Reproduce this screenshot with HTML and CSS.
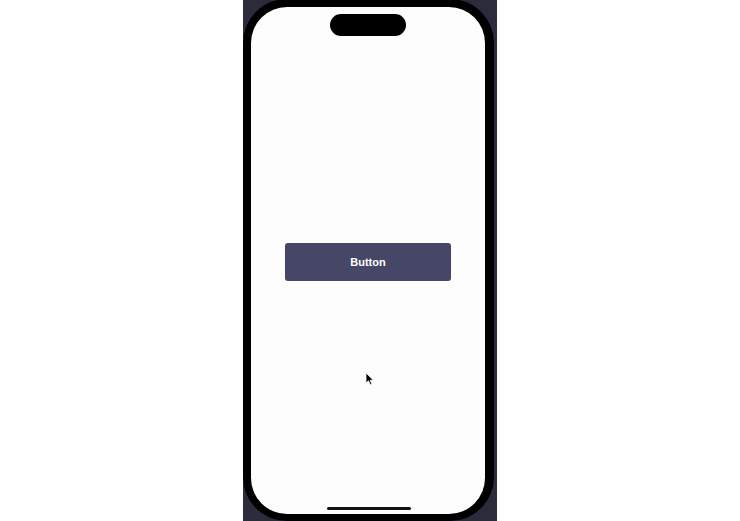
FILE: index.html
```html
<!DOCTYPE html>
<html>
<head>
<meta charset="utf-8">
<link rel="stylesheet" href="styles.css">
</head>
<body>
<div class="stage">
  <div class="device">
    <div class="bezel">
      <div class="screen">
        <div class="island"></div>
        <div class="content">
          <button class="btn">Button</button>
        </div>
        <svg class="cursor" width="10" height="14" viewBox="0 0 10 14">
          <path d="M1 1 L1 11 L3.5 8.8 L5.3 12.8 L6.9 12.1 L5.2 8.2 L8.4 8.1 Z" fill="#000" stroke="#fff" stroke-width="0.8"/>
        </svg>
        <div class="home"></div>
      </div>
    </div>
  </div>
</div>
</body>
</html>
```
FILE: styles.css
```css
html, body {
  margin: 0;
  padding: 0;
  background: #ffffff;
}
.stage {
  width: 740px;
  height: 521px;
  display: flex;
  justify-content: flex-start;
  overflow: hidden;
}
.device {
  margin-left: 243px;
  width: 254px;
  height: 521px;
  background: #2c2b3b;
  display: flex;
  flex-direction: column;
}
.bezel {
  margin: -1px 3px 0 0;
  height: 523px;
  background: #000;
  border-radius: 44px;
  padding: 8px 9px 7px 8px;
  box-sizing: border-box;
  display: flex;
}
.screen {
  position: relative;
  flex: 1;
  background: #fdfdfd;
  border-radius: 36px;
  display: flex;
  flex-direction: column;
  align-items: center;
}
.island {
  margin-top: 7px;
  width: 76px;
  height: 22px;
  background: #000;
  border-radius: 11px;
}
.content {
  flex: 1;
  display: flex;
  justify-content: center;
  padding-top: 207px;
}
.btn {
  width: 166px;
  height: 38px;
  background: #464766;
  color: #ffffff;
  border: none;
  border-radius: 3px;
  font-family: "Liberation Sans", Arial, sans-serif;
  font-weight: bold;
  font-size: 11px;
  padding: 0;
}
.home {
  position: absolute;
  left: 76px;
  bottom: 4px;
  width: 84px;
  height: 3px;
  background: #111;
  border-radius: 2px;
}
.cursor {
  position: absolute;
  left: 114px;
  top: 365px;
}
```
